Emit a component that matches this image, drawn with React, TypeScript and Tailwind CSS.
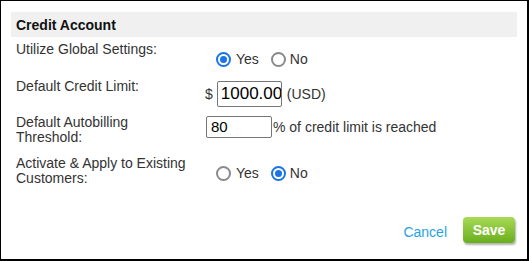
import React from 'react';

function Radio({ checked }: { checked?: boolean }) {
    return (
        <span
            className={
                'inline-flex items-center justify-center w-[15px] h-[15px] rounded-full border-2 bg-white shrink-0 ' +
                (checked ? 'border-[#1a73e8]' : 'border-[#8a8a8a]')
            }
        >
            {checked && <span className="w-[7px] h-[7px] rounded-full bg-[#1a73e8]" />}
        </span>
    );
}

function YesNo({ value }: { value: 'yes' | 'no' }) {
    return (
        <div className="flex items-center h-[15px] ml-[11px] text-[14px] text-[#333]">
            <Radio checked={value === 'yes'} />
            <span className="ml-[5px]">Yes</span>
            <span className="ml-[12px] flex items-center">
                <Radio checked={value === 'no'} />
            </span>
            <span className="ml-[4px]">No</span>
        </div>
    );
}

export default function App() {
    return (
        <div className="w-[529px] h-[261px] bg-white border-l border-t border-r-2 border-b-2 border-black flex flex-col font-['Liberation_Sans',Arial,sans-serif]">
            {/* Header */}
            <div className="mt-[11px] mx-[10px] h-[25px] bg-[#f0f0f0] flex items-center pl-[5px]">
                <span className="text-[14px] font-bold text-[#111] leading-[16px]">Credit Account</span>
            </div>

            <div className="pl-[15px] pt-[5px] text-[14px] text-[#333]">
                {/* Row 1 */}
                <div className="flex h-[37px]">
                    <div className="w-[189px] leading-[15px]">Utilize Global Settings:</div>
                    <div className="pt-[10px]">
                        <YesNo value="yes" />
                    </div>
                </div>

                {/* Row 2 */}
                <div className="flex h-[36px]">
                    <div className="w-[189px] leading-[15px]">Default Credit Limit:</div>
                    <div className="pt-[2px] flex items-baseline">
                        <span className="text-[14px]">$</span>
                        <input
                            readOnly
                            value="1000.00"
                            className="ml-[4px] w-[65px] h-[26px] border border-[#767676] rounded-[2px] pl-[3px] text-[17px] text-black outline-none"
                        />
                        <span className="ml-[5px]">(USD)</span>
                    </div>
                </div>

                {/* Row 3 */}
                <div className="flex h-[41px]">
                    <div className="w-[189px] leading-[15px]">
                        Default Autobilling
                        <br />
                        Threshold:
                    </div>
                    <div className="pt-[1px] flex items-center h-[23px]">
                        <input
                            readOnly
                            value="80"
                            className="ml-[1px] w-[66px] h-[22px] border border-[#767676] rounded-[2px] pl-[4px] text-[15px] text-black outline-none"
                        />
                        <span className="ml-[1px]">% of credit limit is reached</span>
                    </div>
                </div>

                {/* Row 4 */}
                <div className="flex">
                    <div className="w-[189px] leading-[15px]">
                        Activate &amp; Apply to Existing
                        <br />
                        Customers:
                    </div>
                    <div className="pt-[10px]">
                        <YesNo value="no" />
                    </div>
                </div>
            </div>

            {/* Actions */}
            <div className="mt-auto pb-[16px] pr-[12px] flex items-center justify-end">
                <a href="#" className="text-[14px] text-[#1fa3e6] mr-[16px] mt-[4px]">
                    Cancel
                </a>
                <button className="w-[52px] h-[26px] rounded-[4px] bg-gradient-to-b from-[#a8da55] to-[#6aae1b] text-white text-[14px] font-bold shadow-[1px_2px_2px_rgba(0,0,0,0.3)]">
                    Save
                </button>
            </div>
        </div>
    );
}
